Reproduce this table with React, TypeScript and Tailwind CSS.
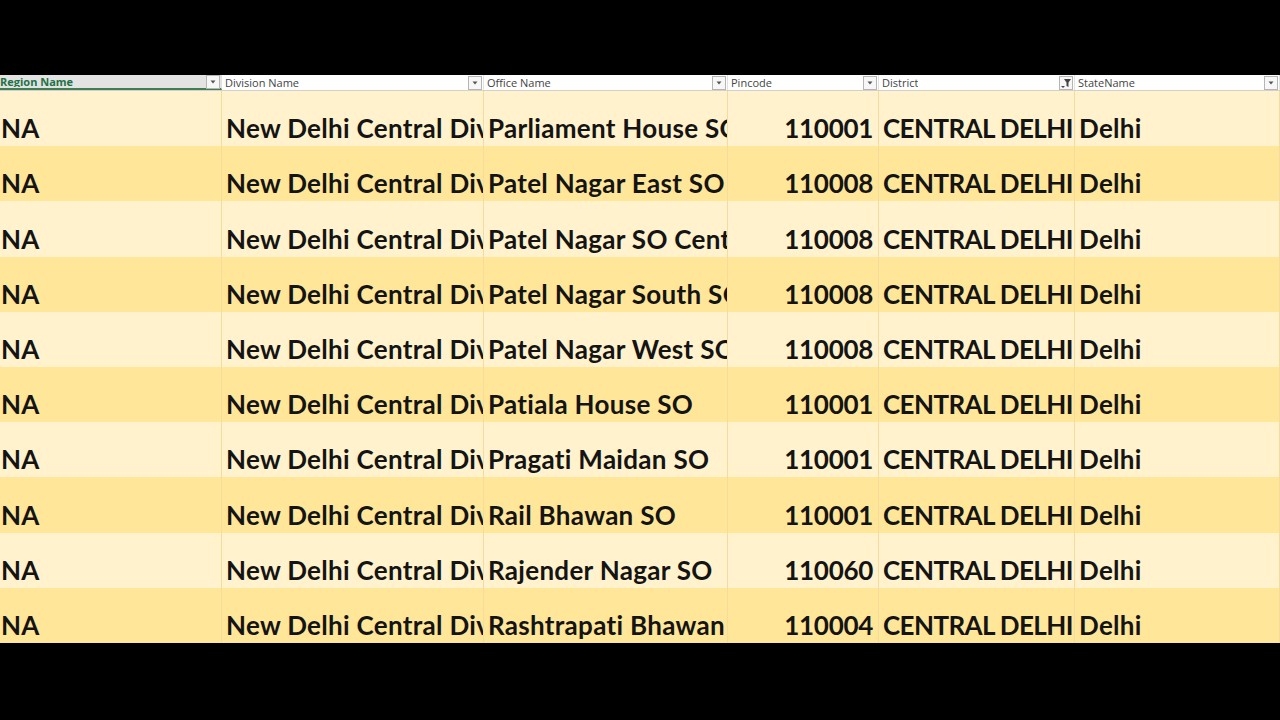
const HEADERS = ['Region Name', 'Division Name', 'Office Name', 'Pincode', 'District', 'StateName'];

// widths of the sheet columns, px
const WIDTHS = [222, 262, 244, 151, 196, 205];

const ROWS: string[][] = [
  ['NA', 'New Delhi Central Division', 'Parliament House SO', '110001', 'CENTRAL DELHI', 'Delhi'],
  ['NA', 'New Delhi Central Division', 'Patel Nagar East SO', '110008', 'CENTRAL DELHI', 'Delhi'],
  ['NA', 'New Delhi Central Division', 'Patel Nagar SO Central', '110008', 'CENTRAL DELHI', 'Delhi'],
  ['NA', 'New Delhi Central Division', 'Patel Nagar South SO', '110008', 'CENTRAL DELHI', 'Delhi'],
  ['NA', 'New Delhi Central Division', 'Patel Nagar West SO', '110008', 'CENTRAL DELHI', 'Delhi'],
  ['NA', 'New Delhi Central Division', 'Patiala House SO', '110001', 'CENTRAL DELHI', 'Delhi'],
  ['NA', 'New Delhi Central Division', 'Pragati Maidan SO', '110001', 'CENTRAL DELHI', 'Delhi'],
  ['NA', 'New Delhi Central Division', 'Rail Bhawan SO', '110001', 'CENTRAL DELHI', 'Delhi'],
  ['NA', 'New Delhi Central Division', 'Rajender Nagar SO', '110060', 'CENTRAL DELHI', 'Delhi'],
  ['NA', 'New Delhi Central Division', 'Rashtrapati Bhawan SO', '110004', 'CENTRAL DELHI', 'Delhi'],
];

const DropButton = ({ filtered }: { filtered?: boolean }) => (
  <div className="w-[14px] h-[14px] shrink-0 border border-[#b5b5b5] bg-[#f7f7f7] flex items-center justify-center">
    {filtered ? (
      <svg width="12" height="12" viewBox="0 0 12 12">
        <path d="M1 9 L3 11 L5 9 Z" fill="#444" />
        <path d="M4 2 H11 L8.5 5.5 V10 L6.5 9 V5.5 Z" fill="#444" />
      </svg>
    ) : (
      <svg width="8" height="6" viewBox="0 0 8 6">
        <path d="M1.5 1.5 H6.5 L4 4.5 Z" fill="#555" />
      </svg>
    )}
  </div>
);

export default function App() {
  return (
    <div
      className="w-[1280px] h-[720px] bg-black overflow-hidden flex flex-col"
      style={{ fontFamily: 'Lato, "Open Sans", sans-serif' }}
    >
      <div className="h-[75px] shrink-0" />
      <div className="h-[16px] shrink-0 flex bg-white border-b border-[#d0d0d0]">
        {HEADERS.map((h, i) => (
          <div
            key={h}
            style={{ width: WIDTHS[i] }}
            className={`shrink-0 flex items-center justify-between border-r border-[#e2e2e2] pr-[1px] ${
              i === 0 ? 'bg-[#e3e3e3] border-b-2 border-b-[#3f7d52]' : 'pl-[3px]'
            }`}
          >
            <span
              className={`text-[11px] leading-none whitespace-nowrap overflow-hidden ${
                i === 0 ? 'font-bold text-[#217346]' : 'text-[#444]'
              }`}
              style={{ fontFamily: '"Open Sans", sans-serif' }}
            >
              {h}
            </span>
            <DropButton filtered={i === 4} />
          </div>
        ))}
      </div>
      {ROWS.map((row, r) => (
        <div
          key={r}
          className={`h-[55.2px] shrink-0 flex ${r % 2 === 0 ? 'bg-[#fff2cc]' : 'bg-[#ffe699]'}`}
        >
          {row.map((cell, c) => (
            <div
              key={c}
              style={{ width: WIDTHS[c] }}
              className={`shrink-0 flex items-end overflow-hidden border-r border-[#f3dc9c] pb-[5px] ${
                c === 0 ? 'pl-[1px]' : c === 3 ? 'justify-end pr-[5px]' : 'pl-[4px]'
              }`}
            >
              <span
                className={`text-[26px] leading-none font-bold text-[#141414] whitespace-nowrap ${
                  c === 4 ? 'tracking-[-0.6px]' : c === 3 ? 'tracking-[-0.3px]' : 'tracking-[0.3px]'
                }`}
              >
                {cell}
              </span>
            </div>
          ))}
        </div>
      ))}
    </div>
  );
}
